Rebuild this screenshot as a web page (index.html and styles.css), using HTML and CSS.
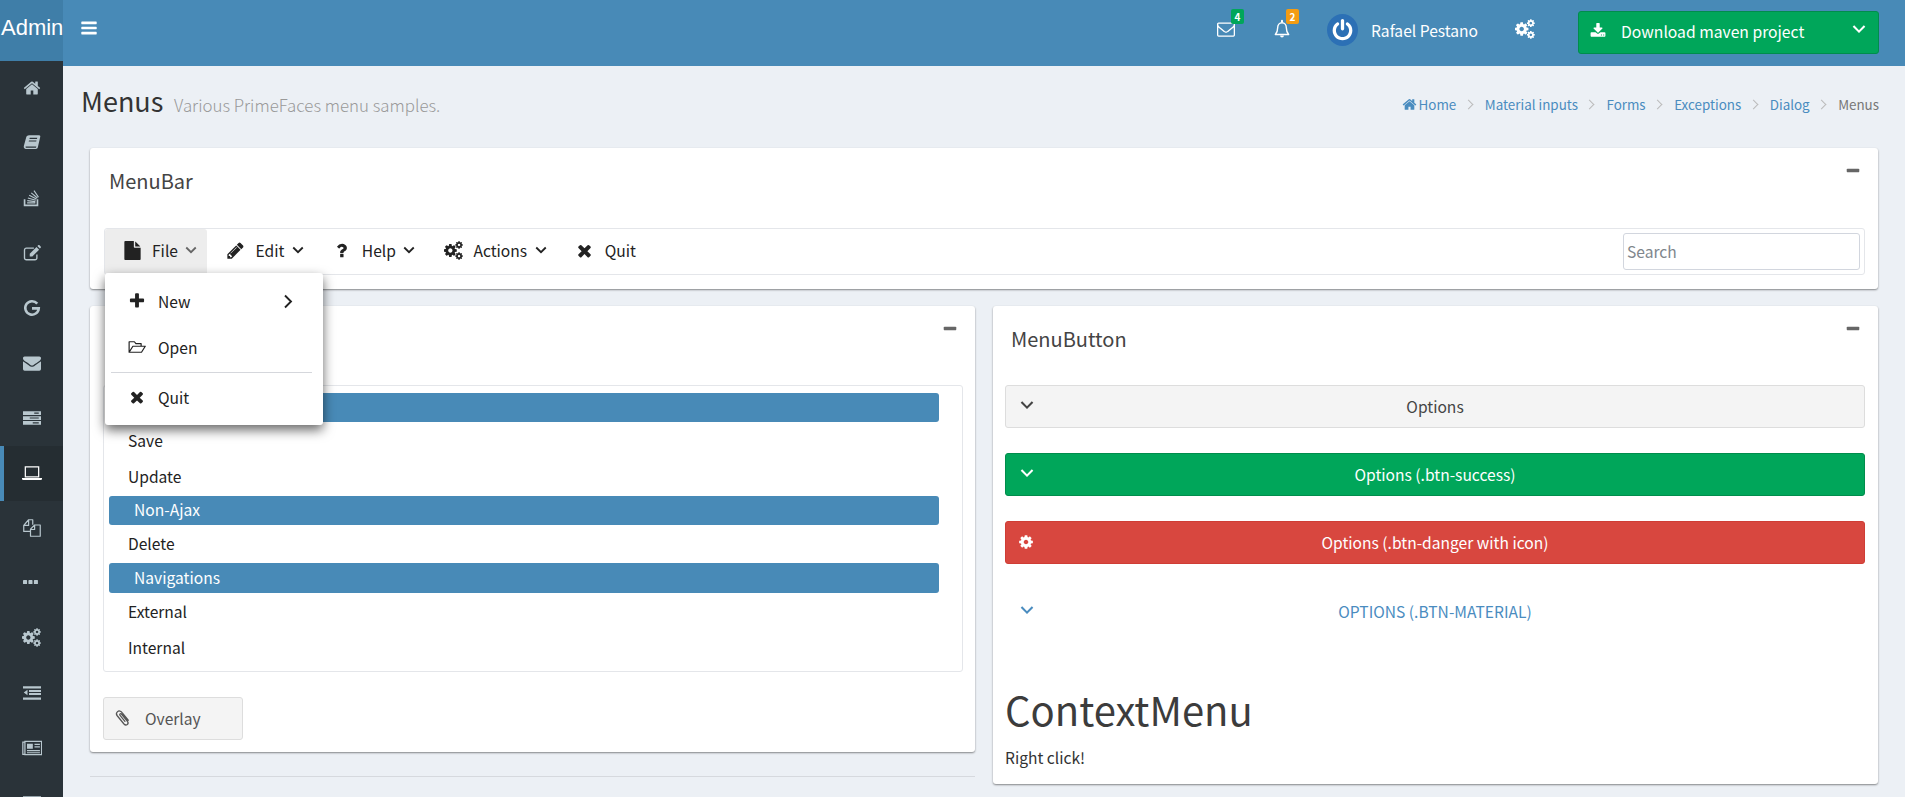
FILE: index.html
```html
<!DOCTYPE html>
<html lang="en">
<head>
<meta charset="utf-8">
<title>Menus</title>
<link rel="stylesheet" href="styles.css">
</head>
<body>
<svg class="sprite" xmlns="http://www.w3.org/2000/svg">
  <defs>
    <symbol id="i-bars" viewBox="0 0 1792 1792"><path d="M1664 1344v128q0 26-19 45t-45 19h-1408q-26 0-45-19t-19-45v-128q0-26 19-45t45-19h1408q26 0 45 19t19 45zm0-512v128q0 26-19 45t-45 19h-1408q-26 0-45-19t-19-45v-128q0-26 19-45t45-19h1408q26 0 45 19t19 45zm0-512v128q0 26-19 45t-45 19h-1408q-26 0-45-19t-19-45v-128q0-26 19-45t45-19h1408q26 0 45 19t19 45z"/></symbol>
    <symbol id="i-home" viewBox="0 0 1792 1792"><path d="M1472 992v480q0 26-19 45t-45 19h-384v-384h-256v384h-384q-26 0-45-19t-19-45v-480q0-1 .5-3t.5-3l575-474 575 474q1 2 1 6zm223-69l-62 74q-8 9-21 11h-3q-13 0-21-7l-692-577-692 577q-12 8-24 7-13-2-21-11l-62-74q-8-10-7-23.5t11-21.5l719-599q32-26 76-26t76 26l244 204v-195q0-14 9-23t23-9h192q14 0 23 9t9 23v408l219 182q10 8 11 21.5t-7 23.5z"/></symbol>
    <symbol id="i-chev" viewBox="0 0 24 24"><path fill="none" stroke="currentColor" stroke-width="3.600" d="m2.500 7 9.500 9.500L21.500 7"/></symbol>
    <symbol id="i-times" viewBox="0 0 1792 1792"><path d="M1490 1322q0 40-28 68l-136 136q-28 28-68 28t-68-28l-294-294-294 294q-28 28-68 28t-68-28l-136-136q-28-28-28-68t28-68l294-294-294-294q-28-28-28-68t28-68l136-136q28-28 68-28t68 28l294 294 294-294q28-28 68-28t68 28l136 136q28 28 28 68t-28 68l-294 294 294 294q28 28 28 68z"/></symbol>
    <symbol id="i-plus" viewBox="0 0 1792 1792"><path d="M1600 736v192q0 40-28 68t-68 28h-416v416q0 40-28 68t-68 28h-192q-40 0-68-28t-28-68v-416h-416q-40 0-68-28t-28-68v-192q0-40 28-68t68-28h416v-416q0-40 28-68t68-28h192q40 0 68 28t28 68v416h416q40 0 68 28t28 68z"/></symbol>
    <symbol id="i-minus" viewBox="0 0 1792 1792"><path d="M1600 736v192q0 40-28 68t-68 28h-1216q-40 0-68-28t-28-68v-192q0-40 28-68t68-28h1216q40 0 68 28t28 68z"/></symbol>
    <symbol id="i-env" viewBox="0 0 1792 1792"><path d="M1792 710v794q0 66-47 113t-113 47h-1472q-66 0-113-47t-47-113v-794q44 49 101 87 362 246 497 345 57 42 92.5 65.5t94.5 48 110 24.5h2q51 0 110-24.5t94.5-48 92.5-65.5q170-123 498-345 57-39 100-87zm0-294q0 79-49 151t-122 123q-376 261-468 325-10 7-42.5 30.5t-54 38-52 32.5-57.5 27-50 9h-2q-23 0-50-9t-57.5-27-52-32.5-54-38-42.5-30.5q-91-64-262-182.5t-205-142.5q-62-42-117-115.5t-55-136.5q0-78 41.5-130t118.5-52h1472q65 0 112.5 47t47.5 113z"/></symbol>
    <symbol id="i-env-o" viewBox="0 0 1792 1792"><path d="M1664 1504v-768q-32 36-69 66-268 206-426 338-51 43-83 67t-86.5 48.5-102.5 24.5h-2q-48 0-102.5-24.5t-86.5-48.5-83-67q-158-132-426-338-37-30-69-66v768q0 13 9.5 22.5t22.5 9.5h1472q13 0 22.5-9.5t9.5-22.5zm0-1051v-24.5l-.5-13-3-12.5-5.5-9-9-7.5-14-2.5h-1472q-13 0-22.5 9.5t-9.5 22.5q0 168 147 284 193 152 401 317 6 5 35 29.5t46 37.5 44.5 31.5 50.5 27.5 43 9h2q20 0 43-9t50.5-27.5 44.5-31.5 46-37.5 35-29.5q208-165 401-317 54-43 100.5-115.5t46.5-131.5zm128-37v1088q0 66-47 113t-113 47h-1472q-66 0-113-47t-47-113v-1088q0-66 47-113t113-47h1472q66 0 113 47t47 113z"/></symbol>
    <symbol id="i-bell" viewBox="0 0 24 24"><path fill="none" stroke="currentColor" stroke-width="1.700" stroke-linejoin="round" d="M4 18.500c2-2 2.800-4.200 2.800-8 0-3.500 2.200-6 5.200-6s5.200 2.500 5.200 6c0 3.800.8 6 2.800 8z"/><path d="M10.800 2.200a1.200 1.200 0 0 1 2.400 0v2h-2.400zM9.700 19.800h4.600a2.300 2.300 0 0 1-4.600 0z"/></symbol>
    <symbol id="i-power" viewBox="0 0 1792 1792"><path d="M1664 896q0 156-61 298t-164 245-245 164-298 61-298-61-245-164-164-245-61-298q0-182 80.500-343t226.500-270q43-32 95.500-25t83.500 50q32 42 24.500 94.500t-49.500 84.500q-98 74-151.500 181t-53.500 228q0 104 40.500 198.500t109.500 163.500 163.500 109.500 198.500 40.500 198.500-40.500 163.500-109.500 109.500-163.500 40.500-198.500q0-121-53.500-228t-151.500-181q-42-32-49.500-84.500t24.500-94.500q31-43 84-50t95 25q146 109 226.500 270t80.500 343zm-640-768v640q0 52-38 90t-90 38-90-38-38-90v-640q0-52 38-90t90-38 90 38 38 90z"/></symbol>
    <symbol id="i-download" viewBox="0 0 1792 1792"><path d="M1344 1344q0-26-19-45t-45-19-45 19-19 45 19 45 45 19 45-19 19-45zm256 0q0-26-19-45t-45-19-45 19-19 45 19 45 45 19 45-19 19-45zm128-224v320q0 40-28 68t-68 28h-1472q-40 0-68-28t-28-68v-320q0-40 28-68t68-28h465l135 136q58 56 136 56t136-56l136-136h464q40 0 68 28t28 68zm-325-569q17 41-14 70l-448 448q-18 19-45 19t-45-19l-448-448q-31-29-14-70 17-39 59-39h256v-448q0-26 19-45t45-19h256q26 0 45 19t19 45v448h256q42 0 59 39z"/></symbol>
    <symbol id="i-file" viewBox="0 0 1792 1792"><path d="M1152 512v-472q22 14 36 28l408 408q14 14 28 36h-472zm-128 32q0 40 28 68t68 28h544v1056q0 40-28 68t-68 28h-1344q-40 0-68-28t-28-68v-1600q0-40 28-68t68-28h800v544z"/></symbol>
    <symbol id="i-pencil" viewBox="0 0 1792 1792"><path d="M491 1536l91-91-235-235-91 91v107h128v128h107zm523-928q0-22-22-22-10 0-17 7l-542 542q-7 7-7 17 0 22 22 22 10 0 17-7l542-542q7-7 7-17zm-54-192l416 416-832 832h-416v-416zm683 96q0 53-37 90l-166 166-416-416 166-165q36-38 90-38 53 0 91 38l235 234q37 39 37 91z"/></symbol>
    <symbol id="i-question" viewBox="0 0 1792 1792"><path d="M1088 1256v240q0 16-12 28t-28 12h-240q-16 0-28-12t-12-28v-240q0-16 12-28t28-12h240q16 0 28 12t12 28zm316-600q0 54-15.500 101t-35 76.500-55 59.500-57.500 43.500-61 35.500q-41 23-68.500 65t-27.500 67q0 17-12 32.500t-28 15.500h-240q-15 0-25.500-18.500t-10.500-37.500v-45q0-83 65-156.500t143-108.500q59-27 84-56t25-76q0-42-46.500-74t-107.500-32q-65 0-108 29-35 25-107 115-13 16-31 16-12 0-25-8l-164-125q-13-10-15.500-25t5.500-28q160-266 464-266 80 0 161 31t146 83 106 127.500 41 158.500z"/></symbol>
    <symbol id="i-cog" viewBox="0 0 1792 1792"><path d="M1152 896q0-106-75-181t-181-75-181 75-75 181 75 181 181 75 181-75 75-181zm512-109v222q0 12-8 23t-20 13l-185 28q-19 54-39 91 35 50 107 138 10 12 10 25t-9 23q-27 37-99 108t-94 71q-12 0-26-9l-138-108q-44 23-91 38-16 136-29 186-7 28-36 28h-222q-14 0-24.500-8.500t-11.500-21.500l-28-184q-49-16-90-37l-141 107q-10 9-25 9-14 0-25-11-126-114-165-168-7-10-7-23 0-12 8-23 15-21 51-66.500t54-70.500q-27-50-41-99l-183-27q-13-2-21-12.500t-8-23.500v-222q0-12 8-23t19-13l186-28q14-46 39-92-40-57-107-138-10-12-10-24 0-10 9-23 26-36 98.500-107.500t94.500-71.500q13 0 26 10l138 107q44-23 91-38 16-136 29-186 7-28 36-28h222q14 0 24.500 8.500t11.500 21.500l28 184q49 16 90 37l142-107q9-9 24-9 13 0 25 10 129 119 165 170 7 8 7 22 0 12-8 23-15 21-51 66.500t-54 70.500q26 50 41 98l183 28q13 2 21 12.500t8 23.500z"/></symbol>
    <symbol id="i-cogs" viewBox="0 0 24 24"><use href="#i-cog" x="-1.500" y="2.500" width="19" height="19"/><use href="#i-cog" x="13.500" y="-.5" width="11" height="11"/><use href="#i-cog" x="13.500" y="13.500" width="11" height="11"/></symbol>
    <symbol id="i-book" viewBox="0 0 24 24"><path fill-rule="evenodd" d="M8 1.500h13.500c1.300 0 1.800 1 1.500 2.200l-3.200 14c-.3 1.300-1.200 2.300-2.800 2.300h-13c-2 0-3.500-1.800-2.900-4l3.300-12C5 2.500 6.300 1.500 8 1.500zm1 3.500-.4 1.600h10L19 5zm-1 3.500-.4 1.600h10l.4-1.600zM3.500 16.500c-.3 1 .3 1.800 1.300 1.800h12.500l.4-1.800z"/></symbol>
    <symbol id="i-stack" viewBox="0 0 24 24"><path d="M1 13.500h2.200v7h15v-7h2.200v9.400H1z"/><path d="M5.500 17.800h11v1.500h-11zM5.800 14.800l10.800 1.200-.2 1.500L5.600 16.300z"/><path d="m6.700 11.300 10.500 3-.4 1.500-10.500-3zM8.600 7.800l9.700 5-.7 1.300-9.700-5zM11.500 4.500l8.200 6.900-1 1.200-8.200-6.900zM15.300 1.700l6 8.800-1.300.9-6-8.800z"/></symbol>
    <symbol id="i-edit" viewBox="0 0 24 24"><path fill="none" stroke="currentColor" stroke-width="1.800" d="M18.500 14v4.500a2.500 2.500 0 0 1-2.500 2.500H4.500A2.500 2.500 0 0 1 2 18.500V8a2.500 2.500 0 0 1 2.500-2.500h10"/><path d="m9 13 9-9 3.500 3.500-9 9H9zM19.200 2.800l1-1c.6-.6 1.300-.6 1.800 0l1.500 1.500c.6.600.6 1.200 0 1.800l-1 1z"/></symbol>
    <symbol id="i-google" viewBox="0 0 24 24"><path fill="none" stroke="currentColor" stroke-width="3.400" d="M19 6.200A9 9 0 1 0 21 12.500H12"/></symbol>
    <symbol id="i-server" viewBox="0 0 24 24"><path fill-rule="evenodd" d="M0 3h24v5H0zM15 4.800v1.400h6V4.800zM0 9.500h24v5H0zM9 11.300v1.400h12v-1.400zM0 16h24v5H0zM13 17.800v1.400h8v-1.400z"/></symbol>
    <symbol id="i-laptop" viewBox="0 0 24 24"><path fill="none" stroke="currentColor" stroke-width="1.500" d="M4 4.700h16v12H4z"/><path d="M0 18h24v1a1.500 1.500 0 0 1-1.500 1.500h-21A1.500 1.500 0 0 1 0 19z"/></symbol>
    <symbol id="i-files" viewBox="0 0 24 24"><path fill="none" stroke="currentColor" stroke-width="1.600" stroke-linejoin="round" d="M9.500 16.500H1V8.500L7.500 1H13v6.500M7.500 1v7.500H1M10 23V13.500L15.500 8H23v15zM15.500 8v6H10"/></symbol>
    <symbol id="i-dots" viewBox="0 0 24 24"><rect x="0" y="8" width="6.500" height="6.500" rx="1"/><rect x="8.700" y="8" width="6.500" height="6.500" rx="1"/><rect x="17.400" y="8" width="6.500" height="6.500" rx="1"/></symbol>
    <symbol id="i-outdent" viewBox="0 0 24 24"><path d="M0 3h24v3H0zM8 8h16v2.500H8zM8 12h16v2.500H8zM0 18h24v3H0zM6 7.500v7.500L1 11.200z"/></symbol>
    <symbol id="i-news" viewBox="0 0 24 24"><path fill="none" stroke="currentColor" stroke-width="1.500" d="M3.500 5v14.500H1V5zM3.500 4h20v16h-20z"/><path d="M6 7h7v6H6zM15 7h6.500v1.500H15zM15 10h6.500v1.500H15zM6 14.500h15.500V16H6zM6 17h15.500v1.300H6z"/></symbol>
    <symbol id="i-folder" viewBox="0 0 24 24"><path fill="none" stroke="currentColor" stroke-width="1.600" stroke-linejoin="round" d="M1.500 19V5h7l2 2.500h7V11M1.500 19h16.500L23 11H6.500z"/></symbol>
    <symbol id="i-clip" viewBox="0 0 24 24"><path fill="none" stroke="currentColor" stroke-width="1.700" stroke-linecap="round" d="m19 15-8.500-10.500C9 2.500 6.500 2 4.700 3.500 3 5 3 7.300 4.300 9l9 11c1.300 1.400 3 1.700 4.400.6 1.300-1.100 1.300-2.800.2-4.200L10.200 7c-.7-.9-1.500-1-2.100-.5-.6.500-.6 1.300 0 2l6.500 8"/></symbol>
    <symbol id="i-angle" viewBox="0 0 12 20"><path fill="none" stroke="currentColor" stroke-width="2.500" d="m2 2 8 8-8 8"/></symbol>
  </defs>
</svg>

<div class="app">
  <aside class="sidebar">
    <div class="logo">Admin</div>
    <nav class="side-nav">
      <a class="side-item"><svg class="side-icon"><use href="#i-home"/></svg></a>
      <a class="side-item"><svg class="side-icon"><use href="#i-book"/></svg></a>
      <a class="side-item"><svg class="side-icon"><use href="#i-stack"/></svg></a>
      <a class="side-item"><svg class="side-icon"><use href="#i-edit"/></svg></a>
      <a class="side-item"><svg class="side-icon"><use href="#i-google"/></svg></a>
      <a class="side-item"><svg class="side-icon"><use href="#i-env"/></svg></a>
      <a class="side-item"><svg class="side-icon"><use href="#i-server"/></svg></a>
      <a class="side-item active"><svg class="side-icon big"><use href="#i-laptop"/></svg></a>
      <a class="side-item"><svg class="side-icon"><use href="#i-files"/></svg></a>
      <a class="side-item"><svg class="side-icon small"><use href="#i-dots"/></svg></a>
      <a class="side-item"><svg class="side-icon mid"><use href="#i-cogs"/></svg></a>
      <a class="side-item"><svg class="side-icon"><use href="#i-outdent"/></svg></a>
      <a class="side-item"><svg class="side-icon big"><use href="#i-news"/></svg></a>
      <a class="side-item"><svg class="side-icon"><use href="#i-server"/></svg></a>
    </nav>
  </aside>

  <div class="main">
    <header class="topbar">
      <svg class="burger"><use href="#i-bars"/></svg>
      <div class="top-right">
        <a class="top-icon mail"><svg><use href="#i-env-o"/></svg><span class="badge green">4</span></a>
        <a class="top-icon bell"><svg><use href="#i-bell"/></svg><span class="badge orange">2</span></a>
        <span class="avatar"><svg><use href="#i-power"/></svg></span>
        <span class="username">Rafael Pestano</span>
        <svg class="top-cogs"><use href="#i-cogs"/></svg>
        <button class="download">
          <svg class="dl-icon"><use href="#i-download"/></svg>
          <span class="dl-text">Download maven project</span>
          <svg class="dl-chev"><use href="#i-chev"/></svg>
        </button>
      </div>
    </header>

    <main class="content">
      <div class="page-head">
        <h1 class="page-title">Menus <small class="page-sub">Various PrimeFaces menu samples.</small></h1>
        <ol class="crumbs">
          <li><a><svg class="crumb-home"><use href="#i-home"/></svg>Home</a></li>
          <li><a>Material inputs</a></li>
          <li><a>Forms</a></li>
          <li><a>Exceptions</a></li>
          <li><a>Dialog</a></li>
          <li class="current">Menus</li>
        </ol>
      </div>

      <section class="card card-menubar">
        <div class="card-head"><h3>MenuBar</h3><svg class="collapse"><use href="#i-minus"/></svg></div>
        <div class="menubar">
          <div class="mb-item open">
            <svg class="mb-icon"><use href="#i-file"/></svg><span>File</span><svg class="mb-chev"><use href="#i-chev"/></svg>
            <ul class="popup">
              <li class="pop-item"><svg class="pop-icon"><use href="#i-plus"/></svg><span>New</span><svg class="pop-angle"><use href="#i-angle"/></svg></li>
              <li class="pop-item"><svg class="pop-icon"><use href="#i-folder"/></svg><span>Open</span></li>
              <li class="pop-sep"></li>
              <li class="pop-item"><svg class="pop-icon"><use href="#i-times"/></svg><span>Quit</span></li>
            </ul>
          </div>
          <div class="mb-item"><svg class="mb-icon"><use href="#i-pencil"/></svg><span>Edit</span><svg class="mb-chev"><use href="#i-chev"/></svg></div>
          <div class="mb-item"><svg class="mb-icon"><use href="#i-question"/></svg><span>Help</span><svg class="mb-chev"><use href="#i-chev"/></svg></div>
          <div class="mb-item"><svg class="mb-icon"><use href="#i-cogs"/></svg><span>Actions</span><svg class="mb-chev"><use href="#i-chev"/></svg></div>
          <div class="mb-item"><svg class="mb-icon"><use href="#i-times"/></svg><span>Quit</span></div>
          <input class="search" placeholder="Search">
        </div>
      </section>

      <div class="columns">
        <div class="col">
          <section class="card card-menu">
            <div class="card-head"><svg class="collapse"><use href="#i-minus"/></svg></div>
            <ul class="plain-menu">
              <li class="pm-head"></li>
              <li class="pm-item">Save</li>
              <li class="pm-item">Update</li>
              <li class="pm-head">Non-Ajax</li>
              <li class="pm-item">Delete</li>
              <li class="pm-head tall">Navigations</li>
              <li class="pm-item">External</li>
              <li class="pm-item">Internal</li>
            </ul>
            <button class="overlay-btn"><svg><use href="#i-clip"/></svg><span>Overlay</span></button>
          </section>
          <hr class="rule">
        </div>

        <section class="card card-buttons">
          <div class="card-head"><h3>MenuButton</h3><svg class="collapse"><use href="#i-minus"/></svg></div>
          <div class="btn-stack">
            <button class="wide-btn default"><svg><use href="#i-chev"/></svg><span>Options</span></button>
            <button class="wide-btn success"><svg><use href="#i-chev"/></svg><span>Options (.btn-success)</span></button>
            <button class="wide-btn danger"><svg class="gear"><use href="#i-cog"/></svg><span>Options (.btn-danger with icon)</span></button>
            <button class="wide-btn material"><svg><use href="#i-chev"/></svg><span>OPTIONS (.BTN-MATERIAL)</span></button>
          </div>
          <h1 class="context-title">ContextMenu</h1>
          <p class="context-text">Right click!</p>
        </section>
      </div>
    </main>
  </div>
</div>
</body>
</html>
```
FILE: styles.css
```css
* { box-sizing: border-box; }
html, body { margin: 0; height: 100%; overflow: hidden; }
body {
  font-family: "Noto Sans CJK SC", "Noto Sans", sans-serif;
  font-size: 15.6px;
  line-height: 22px;
  color: #333;
  background: #ecf0f5;
}
svg { fill: currentColor; display: block; }
ul, ol { list-style: none; margin: 0; padding: 0; }
button { font: inherit; }
.sprite { position: absolute; width: 0; height: 0; }

.app { display: grid; grid-template-columns: 63px 1fr; height: 797px; overflow: hidden; }

.sidebar { background: #2a3339; display: flex; flex-direction: column; overflow: hidden; }
.logo {
  height: 61px; flex: none; background: #3f7ea8; color: #fff;
  font-family: "Liberation Sans", Arial, sans-serif; font-size: 22px; line-height: 56px;
  padding-left: 1px; white-space: nowrap;
}
.side-nav { display: flex; flex-direction: column; }
.side-item { height: 55px; flex: none; display: flex; align-items: center; justify-content: center; padding-bottom: 2px; color: #b8c7ce; }
.side-item.active { background: #252d32; color: #fff; box-shadow: inset 4px 0 0 #488ab7; }
.side-icon { width: 18px; height: 18px; }
.side-icon.big { width: 20px; height: 20px; }
.side-icon.mid { width: 19px; height: 19px; }
.side-icon.small { width: 15px; height: 15px; margin-right: 3px; }

.main { min-width: 0; display: flex; flex-direction: column; }
.topbar {
  height: 66px; flex: none; background: #488ab7; color: #fff;
  display: flex; align-items: flex-start; justify-content: space-between; padding-right: 26px;
}
.burger { width: 18px; height: 18px; margin: 19px 0 0 17px; }
.top-right { display: flex; align-items: flex-start; }
.top-icon { position: relative; display: block; margin-top: 20px; }
.top-icon svg { width: 18px; height: 18px; }
.bell { margin-left: 37px; }
.bell svg { width: 20px; height: 20px; margin-top: -1px; }
.badge {
  position: absolute; left: 14px; top: -11px; width: 13px; height: 15px; border-radius: 2px;
  color: #fff; font-size: 10px; font-weight: 700; line-height: 15px; text-align: center;
}
.green { background: #00a65a; }
.orange { background: #f39c12; }
.avatar {
  width: 31px; height: 32px; margin: 14px 0 0 35px; border-radius: 50%;
  background: #2c70b5; display: flex; align-items: center; justify-content: center; color: #fff;
}
.avatar svg { width: 23px; height: 23px; }
.username { margin: 18px 0 0 13px; font-size: 15.6px; line-height: 24px; }
.top-cogs { width: 20px; height: 20px; margin: 19px 1px 0 37px; }
.download {
  width: 301px; height: 43px; margin: 11px 0 0 42px; padding: 0;
  background: #00a65a; border: 1px solid #008d4c; border-radius: 3px; color: #fff;
  display: flex; align-items: flex-start;
}
.dl-icon { width: 16px; height: 16px; margin: 11px 0 0 11px; }
.dl-text { margin: 8px 0 0 15px; font-size: 15.7px; line-height: 24px; }
.dl-chev { width: 14px; height: 14px; margin: 10px 12px 0 auto; }

.content { flex: 1; padding: 0 27px 0 27px; min-height: 0; }
.page-head { display: flex; justify-content: space-between; align-items: flex-start; height: 82px; margin-left: -9px; margin-right: -1px; }
.page-title { margin: 16px 0 0; font-size: 27px; line-height: 38px; font-weight: 400; color: #333; }
.page-sub { font-size: 16.850px; font-weight: 300; color: #999; margin-left: 4.500px; }
.crumbs { display: flex; margin-top: 27px; font-size: 13.4px; line-height: 22px; }
.crumbs li { display: flex; align-items: center; color: #777; }
.crumbs li + li::before {
  content: ""; width: 6px; height: 6px; margin: 0 13px 0 8.500px;
  border-top: 1px solid #bbb; border-right: 1px solid #bbb; transform: rotate(45deg);
}
.crumbs a { color: #4a8cbf; display: flex; align-items: center; }
.crumb-home { width: 15px; height: 15px; margin-right: 2px; }

.card { background: #fff; border-radius: 3px; box-shadow: 0 1px 2px rgba(0,0,0,.45); }
.card-head { display: flex; justify-content: space-between; align-items: flex-start; padding: 19px 18px 0 19px; height: 68px; flex: none; }
.card-head h3 { margin: 0; font-size: 20px; line-height: 28px; font-weight: 400; color: #444; }
.card-buttons .card-head h3 { margin-left: -1px; }
.collapse { width: 16px; height: 16px; margin: -4px -1px 0 auto; color: #666; }

.card-menubar { height: 141px; padding-bottom: 13px; margin-bottom: 17px; }
.card-menubar .card-head { height: 80px; }
.menubar {
  height: 47px; margin: 0 13px 0 14px; border: 1px solid #e4e6ea; border-radius: 3px;
  display: flex; align-items: flex-start;
}
.mb-item { position: relative; display: flex; align-items: center; height: 44px; padding: 0 11px 2px 20px; color: #222; }
.mb-item.open { background: #ededed; border-radius: 3px 3px 0 0; padding-right: 9.500px; margin-right: 1.500px; }
.mb-icon { width: 19px; height: 19px; margin: 0 10.500px 0 -2.500px; flex: none; }
.mb-chev { width: 12px; height: 12px; margin-left: 7.500px; flex: none; }
.open > .mb-chev { color: #666; }
.search {
  margin: 4px 4px 0 auto; width: 237px; height: 37px; padding: 0 3px 2px;
  border: 1px solid #d2d6de; border-radius: 3px; font: inherit; color: #333; outline: none;
}
.search::placeholder { color: #80868c; opacity: 1; }

.popup {
  position: absolute; z-index: 5; left: 0; top: 44px; width: 218px; height: 152px; padding: 5px 0 0;
  background: #fff; border-radius: 3px; box-shadow: 0 5px 12px rgba(0,0,0,.6);
}
.pop-item { display: flex; align-items: center; height: 46px; padding: 0 30px 0 25px; color: #222; }
.pop-icon { width: 18px; height: 18px; margin: 0 12px 0 -2px; flex: none; }
.pop-angle { width: 10px; height: 15px; margin-left: auto; }
.pop-sep { height: 1px; margin: 2px 11px 1px 6px; background: #d5d7dc; }

.columns { display: grid; grid-template-columns: 1fr 1fr; gap: 18px; align-items: start; }
.col { min-width: 0; }
.card-menu { height: 446px; padding: 0 12px 0 13px; }
.card-menu .card-head { margin: 0 -12px 0 -13px; height: 79px; }
.plain-menu { height: 287px; border: 1px solid #e4e6ea; border-radius: 3px; padding: 7px 23px 0 5px; margin-bottom: 25px; }
.pm-head { height: 29px; line-height: 27px; margin: 1px 0; padding-left: 25px; background: #488ab7; color: #fff; border-radius: 3px; }
.pm-head.tall { height: 30px; line-height: 29px; }
.plain-menu .pm-head:first-child { margin-top: 0; }
.pm-item { height: 36px; line-height: 34px; padding-left: 19px; color: #222; }
.overlay-btn {
  width: 140px; height: 43px; padding: 0 0 2px 10px; display: flex; align-items: center; gap: 13px;
  background: #f4f4f4; border: 1px solid #ddd; border-radius: 3px; color: #555;
}
.overlay-btn svg { width: 18px; height: 18px; flex: none; color: #555; }
.rule { margin: 24px 0 0; border: 0; border-top: 1px solid #d6d9de; }

.card-buttons { height: 478px; padding: 0 13px 0 12px; }
.card-buttons .card-head { margin: 0 -13px 0 -12px; height: 79px; }
.btn-stack { display: flex; flex-direction: column; gap: 25px; }
.wide-btn {
  position: relative; height: 43px; width: 100%; padding: 0 0 2px; display: flex; align-items: center; justify-content: center;
  border: 1px solid transparent; border-radius: 3px; color: #fff;
}
.wide-btn svg { position: absolute; left: 14px; top: 12px; width: 14px; height: 14px; }
.wide-btn .gear { left: 12px; width: 16px; height: 16px; }
.default { background: #f4f4f4; border-color: #ddd; color: #444; }
.success { background: #00a65a; border-color: #008d4c; }
.danger { background: #d8473f; border-color: #cf3d35; }
.material { background: transparent; color: #4a8cbf; margin-top: 1px; }
.context-title { margin: 50px 0 0; font-size: 40px; line-height: 52px; font-weight: 400; color: #3c3c3c; }
.context-text { margin: 11px 0 0; color: #333; }
```
